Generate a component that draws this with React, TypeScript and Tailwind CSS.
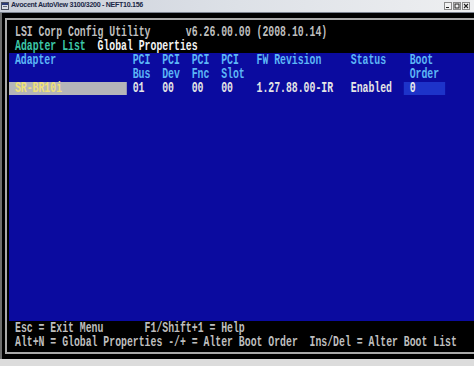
import React from 'react';

type Seg = { c: number; t: string; cls?: string };

function Line({ start, segs, cls = '' }: { start: number; segs: Seg[]; cls?: string }) {
  const items: React.ReactNode[] = [];
  let cur = start;
  segs.forEach((s, i) => {
    if (s.c > cur) items.push(<span key={`g${i}`} className="shrink-0">{' '.repeat(s.c - cur)}</span>);
    items.push(
      <span key={`s${i}`} className={`shrink-0 ${s.cls ?? ''}`}>
        {s.t}
      </span>
    );
    cur = s.c + s.t.length;
  });
  return (
    <div className={`flex h-[14.1px] leading-[14.1px] whitespace-pre origin-left scale-x-[0.7012] ${cls}`}>{items}</div>
  );
}

const GRAY = 'text-[#bebebe]';
const HEAD = 'text-[#5db6f6]';
const VAL = 'text-[#e6e6e6]';

function TitleIcon() {
  return (
    <svg width="8" height="8" viewBox="0 0 8 8" className="shrink-0">
      <rect x="0.5" y="0.5" width="7" height="7" fill="#d8dce4" stroke="#4a5060" />
      <rect x="1" y="1" width="6" height="2" fill="#2c3c78" />
      <rect x="2" y="4" width="4" height="1" fill="#6a7080" />
    </svg>
  );
}

function WinButton({ kind }: { kind: 'min' | 'max' | 'close' }) {
  return (
    <svg width="8" height="8" viewBox="0 0 8 8" className="shrink-0">
      <rect x="0.5" y="0.5" width="7" height="7" fill="#f2f2f2" stroke="#8a8a8a" />
      {kind === 'min' && <rect x="2" y="5" width="3" height="1" fill="#202020" />}
      {kind === 'max' && <rect x="2" y="2" width="4" height="4" fill="none" stroke="#202020" strokeWidth="1" />}
      {kind === 'close' && <path d="M2 2 L6 6 M6 2 L2 6" stroke="#202020" strokeWidth="1.1" />}
    </svg>
  );
}

export default function App() {
  const hl = 'bg-[#b5b5b9] text-[#efe07a] h-[13px] mt-[0.6px] leading-[13px]';
  const hlBlue = 'bg-[#1d33c9] text-[#ececec] h-[13px] mt-[0.6px] leading-[13px]';
  return (
    <div className="w-[474px] h-[366px] overflow-hidden bg-[#d8d8d8] flex flex-col font-['Liberation_Mono',monospace] font-bold text-[14px]">
      {/* title bar */}
      <div className="h-[12px] shrink-0 flex items-center gap-[2px] bg-linear-to-r from-[#c9ced9] via-[#dde1e7] to-[#eeeff1] pl-[1px] pr-[4px]">
        <TitleIcon />
        <span className="text-[7.1px] leading-none font-bold tracking-[-0.3px] text-[#1b2746] font-['Liberation_Sans',sans-serif]">
          Avocent AutoView 3100/3200 - NEFT10.156
        </span>
        <div className="ml-auto flex gap-[1px]">
          <WinButton kind="min" />
          <WinButton kind="max" />
          <WinButton kind="close" />
        </div>
      </div>
      <div className="h-[1px] shrink-0 bg-[#7c8390]" />

      {/* body */}
      <div className="flex h-[346px] shrink-0">
        <div className="flex-1 bg-black border-l-2 border-[#6e6e6e] pl-[3px] pt-[5px]">
          <div className="h-[336px] border-2 border-[#a9a9a9] flex flex-col pt-[5px] overflow-hidden">
            <Line
              start={1}
              cls="pl-[3px]"
              segs={[
                { c: 2, t: 'LSI Corp Config Utility', cls: GRAY },
                { c: 31, t: 'v6.26.00.00 (2008.10.14)', cls: GRAY },
              ]}
            />
            <Line
              start={1}
              cls="pl-[3px]"
              segs={[
                { c: 2, t: 'Adapter List', cls: 'text-[#3cc7a8]' },
                { c: 16, t: 'Global Properties', cls: 'text-[#f4f4f4]' },
              ]}
            />

            {/* blue panel */}
            <div className="h-[268px] shrink-0 ml-[2px] bg-[#0b0b9f] flex">
              <div className="flex-1 min-w-0 flex flex-col overflow-hidden">
                <Line
                  start={1}
                  segs={[
                    { c: 2, t: 'Adapter', cls: HEAD },
                    { c: 22, t: 'PCI', cls: HEAD },
                    { c: 27, t: 'PCI', cls: HEAD },
                    { c: 32, t: 'PCI', cls: HEAD },
                    { c: 37, t: 'PCI', cls: HEAD },
                    { c: 43, t: 'FW Revision', cls: HEAD },
                    { c: 59, t: 'Status', cls: HEAD },
                    { c: 69, t: 'Boot', cls: HEAD },
                  ]}
                />
                <Line
                  start={1}
                  segs={[
                    { c: 22, t: 'Bus', cls: HEAD },
                    { c: 27, t: 'Dev', cls: HEAD },
                    { c: 32, t: 'Fnc', cls: HEAD },
                    { c: 37, t: 'Slot', cls: HEAD },
                    { c: 69, t: 'Order', cls: HEAD },
                  ]}
                />
                <Line
                  start={1}
                  segs={[
                    { c: 1, t: ' SR-BR10i'.padEnd(20, ' '), cls: hl },
                    { c: 22, t: '01', cls: VAL },
                    { c: 27, t: '00', cls: VAL },
                    { c: 32, t: '00', cls: VAL },
                    { c: 37, t: '00', cls: VAL },
                    { c: 43, t: '1.27.88.00-IR', cls: VAL },
                    { c: 59, t: 'Enabled', cls: VAL },
                    { c: 68, t: ' 0     ', cls: hlBlue },
                  ]}
                />
              </div>

              {/* scrollbar */}
              <div className="w-[5px] mr-[2px] mt-[28px] h-[232px] shrink-0 flex flex-col bg-[#b1b1bd]">
                <div className="h-[13px] flex justify-center pt-[2px] bg-[#c4c4cc]">
                  <svg width="5" height="8" viewBox="0 0 5 8">
                    <path d="M2.5 0 L5 8 L0 8 Z" fill="#f6f6f6" />
                  </svg>
                </div>
                <div className="h-[14px] mt-[1px] bg-black" />
                <div className="flex-1" />
                <div className="h-[10px] flex justify-center pt-[1px] bg-[#c4c4cc]">
                  <svg width="5" height="7" viewBox="0 0 5 7">
                    <path d="M0 0 L5 0 L2.5 7 Z" fill="#f6f6f6" />
                  </svg>
                </div>
              </div>
            </div>

            <Line
              start={1}
              cls="pl-[3px]"
              segs={[
                { c: 2, t: 'Esc = Exit Menu', cls: GRAY },
                { c: 24, t: 'F1/Shift+1 = Help', cls: GRAY },
              ]}
            />
            <Line
              start={1}
              cls="pl-[3px]"
              segs={[
                {
                  c: 2,
                  t: 'Alt+N = Global Properties -/+ = Alter Boot Order  Ins/Del = Alter Boot List',
                  cls: GRAY,
                },
              ]}
            />
          </div>
        </div>
        <div className="w-[3px] shrink-0 bg-[#d4d4d4]" />
      </div>
      <div className="flex-1 bg-[#dcdcdc]" />
    </div>
  );
}
